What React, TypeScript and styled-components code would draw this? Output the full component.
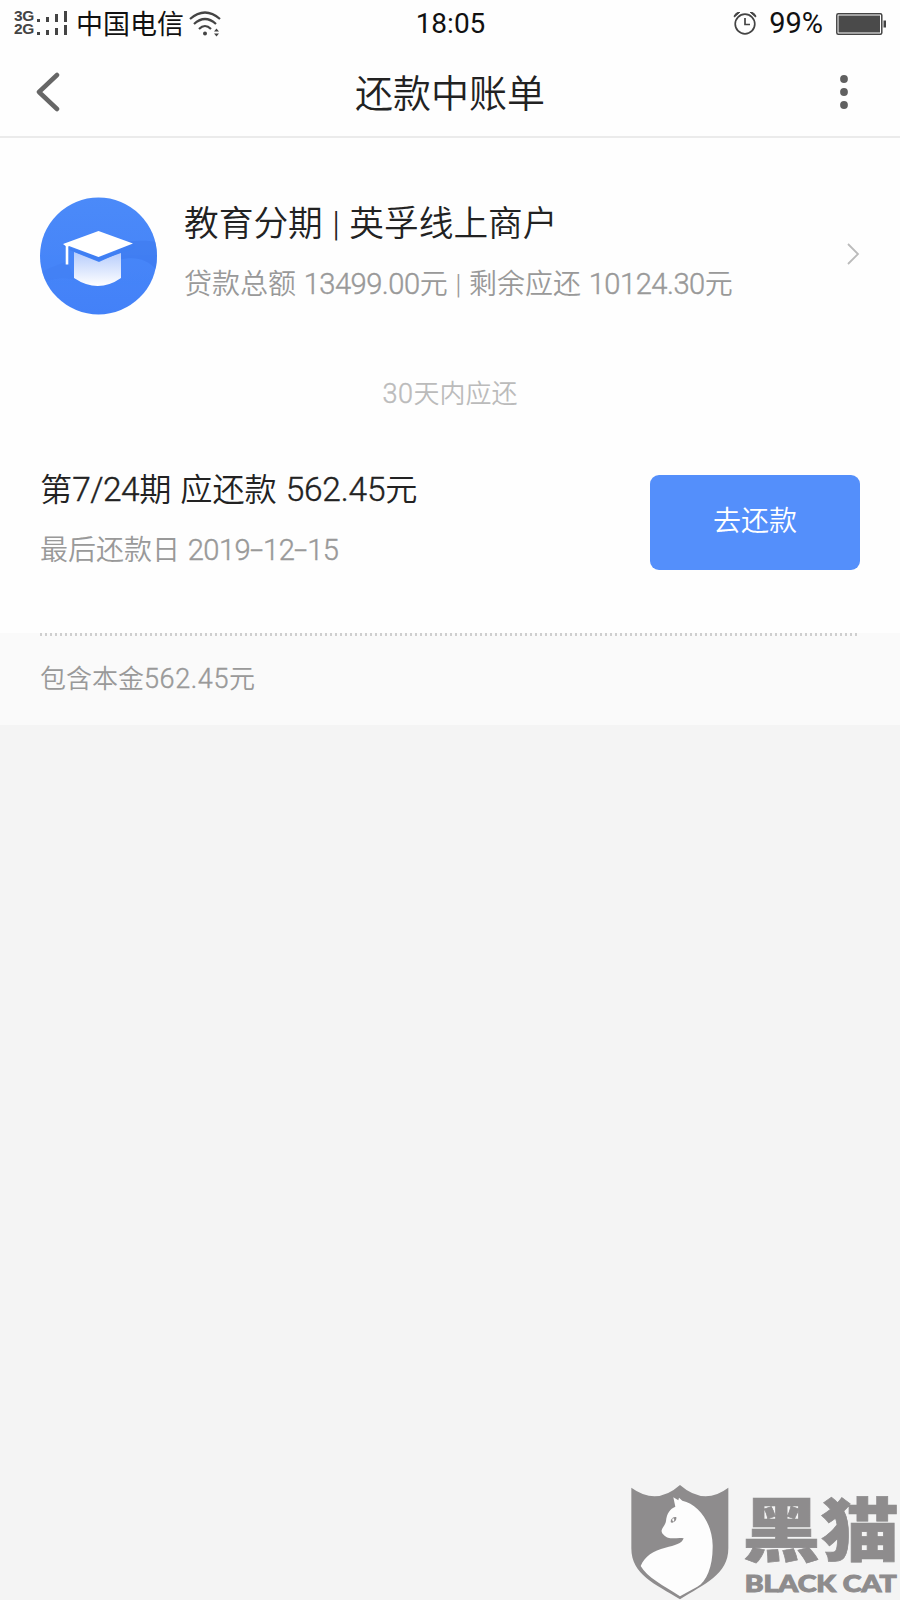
import * as React from 'react'
import styled, { createGlobalStyle } from 'styled-components'

const GlobalStyle = createGlobalStyle`
  body {
    margin: 0;
    background: #f4f4f4;
    font-family: Roboto, 'Noto Sans CJK SC', sans-serif;
    font-weight: 350;
    -webkit-font-smoothing: antialiased;
  }
`

const Screen = styled.div`
  display: flex;
  flex-direction: column;
  width: 900px;
  height: 1600px;
  overflow: hidden;
  background: #f4f4f4;
`

const StatusBar = styled.div`
  display: grid;
  grid-template-columns: 1fr auto 1fr;
  align-items: center;
  height: 47px;
  padding: 0 13px 0 14px;
  background: #fefefe;
  color: #111;
  font-size: 28px;
  font-weight: 400;
  line-height: 47px;
`

const StatusGroup = styled.div<{ $end?: boolean }>`
  display: flex;
  align-items: center;
  justify-content: ${p => (p.$end ? 'flex-end' : 'flex-start')};
`

const Networks = styled.div`
  display: flex;
  flex-direction: column;
  width: 22px;
  margin-bottom: 3px;
  color: #444;
  font: 700 15.5px/13px 'Liberation Sans', sans-serif;
  letter-spacing: -0.4px;
`

const SignalIcon = styled.svg`
  margin: 0 7px 0 1px;
`

const Carrier = styled.span`
  padding-top: 4px;
  font-size: 27px;
  line-height: 43px;
`

const WifiIcon = styled.svg`
  margin-left: 5px;
`

const AlarmIcon = styled.svg`
  margin-right: 12px;
`

const Battery = styled.span`
  font-size: 29px;
`

const BatteryIcon = styled.svg`
  margin-left: 13px;
`

const NavBar = styled.div`
  display: grid;
  grid-template-columns: 1fr auto 1fr;
  align-items: center;
  box-sizing: border-box;
  height: 91px;
  padding: 0 49px 0 35px;
  border-bottom: 2px solid #ebebeb;
  background: #fefefe;
`

const NavTitle = styled.h1`
  margin: 0 0 0 14px;
  padding-top: 4px;
  color: #222;
  font-size: 38px;
  font-weight: 350;
  line-height: 54px;
`

const MoreIcon = styled.svg`
  justify-self: end;
`

const Bill = styled.section`
  display: flex;
  flex-direction: column;
  height: 495px;
  background: #fefefe;
`

const Merchant = styled.div`
  display: flex;
  align-items: center;
  height: 118px;
  padding: 59px 40px 0;
`

const BillText = styled.div<{ $indent?: number }>`
  flex: 1;
  margin: 0 0 8px ${p => p.$indent || 0}px;
`

const Chevron = styled.svg`
  margin-bottom: 4px;
`

const Title = styled.div<{ $size: number }>`
  color: #222;
  font-size: ${p => p.$size}px;
  line-height: 50px;
  white-space: nowrap;
  word-spacing: 1px;
`

const Detail = styled.div`
  margin-top: 16px;
  color: #999;
  font-size: 28px;
  line-height: 40px;
  white-space: nowrap;
  word-spacing: 0.8px;
`

// Latin figures sit slightly taller and heavier than the Chinese text
const Digits = styled.span<{ $gap?: number }>`
  font-size: 1.04em;
  font-weight: 300;
  line-height: 1;
  letter-spacing: ${p => p.$gap || 0}px;
  -webkit-text-stroke: 0.4px currentColor;
`

const Dash = styled.span`
  display: inline-block;
  width: 12.8px;
  transform: scaleX(1.6);
  transform-origin: left;
`

const Period = styled.div`
  margin-top: 59px;
  color: #bbb;
  font-size: 26px;
  line-height: 40px;
  text-align: center;
`

const Installment = styled.div`
  display: flex;
  justify-content: space-between;
  align-items: center;
  margin: 51px 40px 0;
`

const PayButton = styled.button`
  width: 210px;
  height: 95px;
  padding: 0 0 6px;
  border: 0;
  border-radius: 9px;
  background: #548ffb;
  color: #fff;
  font: inherit;
  font-size: 28px;
`

const Note = styled.div`
  height: 92px;
  padding: 0 40px;
  background: #fafafa;
  color: #999;
  font-size: 26px;
  line-height: 87px;
`

const Dots = styled.div`
  height: 3px;
  background: repeating-linear-gradient(90deg, #cfcfcf 0 2.5px, transparent 2.5px 5px);
`

const Watermark = styled.svg`
  margin: auto 0 0 auto;
`

const CapIcon = () => (
  <svg width="118" height="118" viewBox="0 0 118 118">
    <defs>
      <linearGradient id="disc" x1="0" y1="0" x2="0" y2="1">
        <stop offset="0" stopColor="#4b8af9" />
        <stop offset="1" stopColor="#4381f8" />
      </linearGradient>
      <linearGradient id="cap" x1="0" y1="0" x2="0" y2="1">
        <stop offset="0" stopColor="#b5ccfc" />
        <stop offset="1" stopColor="#fff" />
      </linearGradient>
      <clipPath id="round">
        <circle cx="58.500" cy="59" r="58.5" />
      </clipPath>
    </defs>
    <circle cx="58.500" cy="59" r="58.5" fill="url(#disc)" />
    <g clipPath="url(#round)" fill="#3b77ec" opacity="0.5">
      <path d="M76 48C92 42 106 44 118 45V75C108 61 94 59 78 63Z" />
      <path d="M0 76C10 70 19 68 27 64L35 83C22 79 10 82 0 88Z" opacity="0.5" />
    </g>
    <path d="M34 55L59 65L81 55V81Q58 97 34 81Z" fill="url(#cap)" />
    <path d="M22 48L59 60L95 48V51L58.500 64L27 52Z" fill="#3f7ff3" />
    <path d="M58.500 34L93 46.500L58.500 60L29 49L27 50L23 47Z" fill="#fff" />
    <path d="M27 47V67.500" stroke="#fff" strokeWidth="2.600" />
  </svg>
)

const BlackCat = () => (
  <Watermark width="290" height="130" viewBox="0 0 870 390">
    <path
      d="M64 53Q140 108 210 45Q282 108 355 53V235C355 315 282 342 210 388C136 342 64 315 64 235Z"
      fill="#8e8c8d"
    />
    <path
      d="M190 82L205 91L207 83L217 92C264 101 307 158 308 226C309 289 290 334 262 350L210 379C160 346 111 322 92 288C104 258 130 242 166 233C195 226 216 221 221 205C204 202 188 208 174 203C164 199 153 189 155 181C157 172 166 165 168 153C170 131 180 116 196 110Z"
      fill="#fdfdfd"
    />
    <path d="M182 153Q186 139 199 141Q201 154 187 158Q181 159 182 153Z" fill="#8e8c8d" />
    <path d="M189 144Q184 150 190 155Q196 149 189 144Z" fill="#fff" />
    <g fill="#8e8c8d">
      <text
        x="397"
        y="258"
        fontFamily="'Noto Sans CJK SC', sans-serif"
        fontSize="207"
        fontWeight="900"
        stroke="#8e8c8d"
        strokeWidth="2"
        textLength="470"
        lengthAdjust="spacingAndGlyphs"
      >
        黑猫
      </text>
      <text
        x="404"
        y="366"
        fontFamily="Lato, sans-serif"
        fontSize="66"
        fontWeight="900"
        stroke="#8e8c8d"
        strokeWidth="3"
        textLength="456"
        lengthAdjust="spacingAndGlyphs"
      >
        BLACK CAT
      </text>
    </g>
  </Watermark>
)

const App = () => (
  <Screen>
    <GlobalStyle />
    <StatusBar>
      <StatusGroup>
        <Networks>
          <span>3G</span>
          <span>2G</span>
        </Networks>
        <SignalIcon width="32" height="26" viewBox="0 0 32 26" fill="#444">
          <path d="M0 8h3v3H0zM9 6h3v5H9zM18 3h3v8h-3zM27 0h3v11h-3zM0 21h3v3H0zM9 19h3v5H9zM18 17h3v7h-3zM27 14h3v10h-3z" />
        </SignalIcon>
        <Carrier>中国电信</Carrier>
        <WifiIcon width="32" height="26" viewBox="0 0 32 26" fill="none" stroke="#444" strokeWidth="2.200">
          <path d="M1 8Q16-5 31 8M5 13Q16 3 27 13M10 18Q16 12 22 18" />
          <circle cx="16" cy="22.500" r="2" fill="#444" stroke="none" />
          <path d="M25 20.500L27.500 17.500L30 20.500zM25 22.500L27.500 25.500L30 22.500z" fill="#444" stroke="none" />
        </WifiIcon>
      </StatusGroup>
      <span>18:05</span>
      <StatusGroup $end>
        <AlarmIcon width="24" height="24" viewBox="0 0 24 24" fill="none" stroke="#444" strokeWidth="1.700">
          <circle cx="12" cy="12" r="9.800" />
          <path d="M12 6v6.500h5" />
          <path d="M1 4Q3 0 7 0L1.500 5zM23 4Q21 0 17 0L22.500 5z" fill="#444" strokeWidth="1" />
        </AlarmIcon>
        <Battery>99%</Battery>
        <BatteryIcon width="51" height="22" viewBox="0 0 51 22">
          <rect x="0.800" y="0.800" width="45" height="20.400" rx="1.500" fill="#fff" stroke="#444" strokeWidth="1.500" />
          <rect x="2.500" y="2.500" width="41.500" height="17" fill="#4a4a4a" />
          <rect x="47.500" y="7.500" width="2.500" height="7" fill="#444" />
        </BatteryIcon>
      </StatusGroup>
    </StatusBar>
    <NavBar>
      <svg width="26" height="40" viewBox="0 0 26 40" fill="none" stroke="#666" strokeWidth="4.500">
        <path d="M22 3L4 20L22 37" strokeLinecap="round" strokeLinejoin="round" />
      </svg>
      <NavTitle>还款中账单</NavTitle>
      <MoreIcon width="14" height="34" viewBox="0 0 14 34" fill="#606060">
        <circle cx="7" cy="4" r="3.900" />
        <circle cx="7" cy="17" r="3.900" />
        <circle cx="7" cy="30" r="3.900" />
      </MoreIcon>
    </NavBar>
    <Bill>
      <Merchant>
        <CapIcon />
        <BillText $indent={26}>
          <Title $size={34.7}>教育分期 | 英孚线上商户</Title>
          <Detail>
            贷款总额 <Digits $gap={-0.5}>13499.00</Digits>元 | 剩余应还{' '}
            <Digits $gap={-0.5}>10124.30</Digits>元
          </Detail>
        </BillText>
        <Chevron width="14" height="24" viewBox="0 0 14 24" fill="none" stroke="#bbb" strokeWidth="1.800">
          <path d="M2 2L12 12L2 22" />
        </Chevron>
      </Merchant>
      <Period>
        <Digits $gap={0.6}>30</Digits>天内应还
      </Period>
      <Installment>
        <BillText>
          <Title $size={32.2}>
            第<Digits $gap={-0.5}>7/24</Digits>期 应还款 <Digits $gap={-0.2}>562.45</Digits>元
          </Title>
          <Detail>
            最后还款日{' '}
            <Digits $gap={-0.5}>
              2019<Dash>-</Dash>12<Dash>-</Dash>15
            </Digits>
          </Detail>
        </BillText>
        <PayButton>去还款</PayButton>
      </Installment>
    </Bill>
    <Note>
      <Dots />
      包含本金<Digits $gap={0.6}>562.45</Digits>元
    </Note>
    <BlackCat />
  </Screen>
)

export default App
